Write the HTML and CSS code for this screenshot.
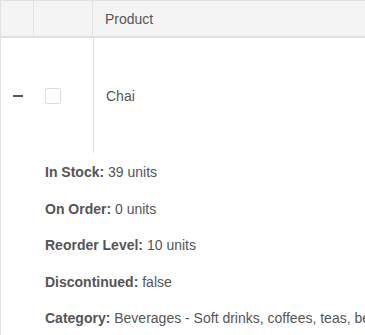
FILE: index.html
```html
<!DOCTYPE html>
<html lang="en">
<head>
  <meta charset="UTF-8" />
  <title>Products</title>
  <link rel="stylesheet" href="styles.css">
</head>
<body>
  <div class="grid">
    <div class="head">
      <div class="cell expand"></div>
      <div class="cell select"></div>
      <div class="cell product">Product</div>
    </div>

    <div class="row">
      <div class="cell expand"><span class="minus"></span></div>
      <div class="cell select"><span class="check"></span></div>
      <div class="cell product">Chai</div>
    </div>

    <div class="detail">
      <p><b>In Stock:</b> 39 units</p>
      <p><b>On Order:</b> 0 units</p>
      <p><b>Reorder Level:</b> 10 units</p>
      <p><b>Discontinued:</b> false</p>
      <p><b>Category:</b> Beverages - Soft drinks, coffees, teas, beers, and ales</p>
    </div>
  </div>
</body>
</html>
```

FILE: styles.css
```css
body {
  margin: 0;
  font-family: "Liberation Sans", Arial, sans-serif;
  color: #555;
  background: #fff;
  overflow: hidden;
}
.grid {
  border-left: 1px solid #e3e3e3;
  width: 364px;
  overflow: hidden;
}
.head, .row {
  display: flex;
}
.head {
  background: #f4f4f4;
  border-top: 1px solid #e0e0e0;
  border-bottom: 2px solid #e0e0e0;
  height: 35px;
  font-size: 14px;
}
.cell {
  display: flex;
  align-items: center;
}
.expand { width: 32px; justify-content: center; }
.select { width: 59px; padding-left: 12px; box-sizing: border-box; }
.product { padding-left: 12px; flex: 1; }
.head .expand, .head .select { border-right: 1px solid #e3e3e3; }
.row {
  height: 115px;
  font-size: 14px;
}
.row .select { width: 60px; }
.row .product { border-left: 1px solid #e3e3e3; }
.minus {
  display: block;
  width: 10px;
  height: 2px;
  background: #555;
  margin-left: 1px;
}
.check {
  display: block;
  width: 14px;
  height: 14px;
  border: 1px solid #ddd;
  border-radius: 2px;
  background: #fff;
}
.detail {
  padding: 1px 0 0 44px;
  font-size: 14px;
}
.detail p {
  margin: 0;
  padding: 10px 0;
  line-height: 16.5px;
  white-space: nowrap;
}
```
